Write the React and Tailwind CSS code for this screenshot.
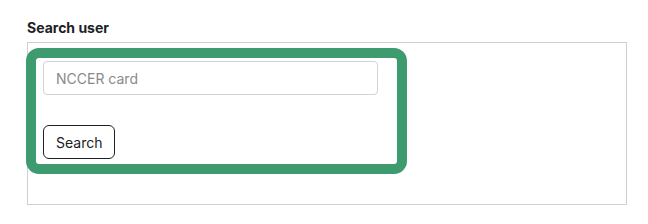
import React from "react";

const App = () => {
  return (
    <div
      className="w-[648px] h-[224px] bg-white px-[27px] pt-[19px]"
      style={{ fontFamily: "Inter, 'Liberation Sans', sans-serif" }}
    >
      <h3 className="text-[14px] font-bold leading-[18px] text-[#1d2125] mb-[5px]">
        Search user
      </h3>
      <div className="w-[600px] h-[163px] border border-[#cfcfcf] pt-[5px]">
        {/* highlighted area */}
        <div className="-ml-[2px] w-[381px] h-[126px] border-[10px] border-[#3e9a6f] rounded-[13px] bg-white pl-[7px] pt-[3px]">
          <input
            type="text"
            placeholder="NCCER card"
            className="block w-[335px] h-[34px] border border-[#d3d3d3] rounded-[4px] px-[12px] text-[14px] text-[#1d2125] placeholder:text-[#8a8a8a] outline-none"
          />
          <button className="mt-[30px] h-[34px] px-[12px] border border-[#1d2125] rounded-[6px] text-[14px] text-[#1d2125] bg-white">
            Search
          </button>
        </div>
      </div>
    </div>
  );
};

export default App;
